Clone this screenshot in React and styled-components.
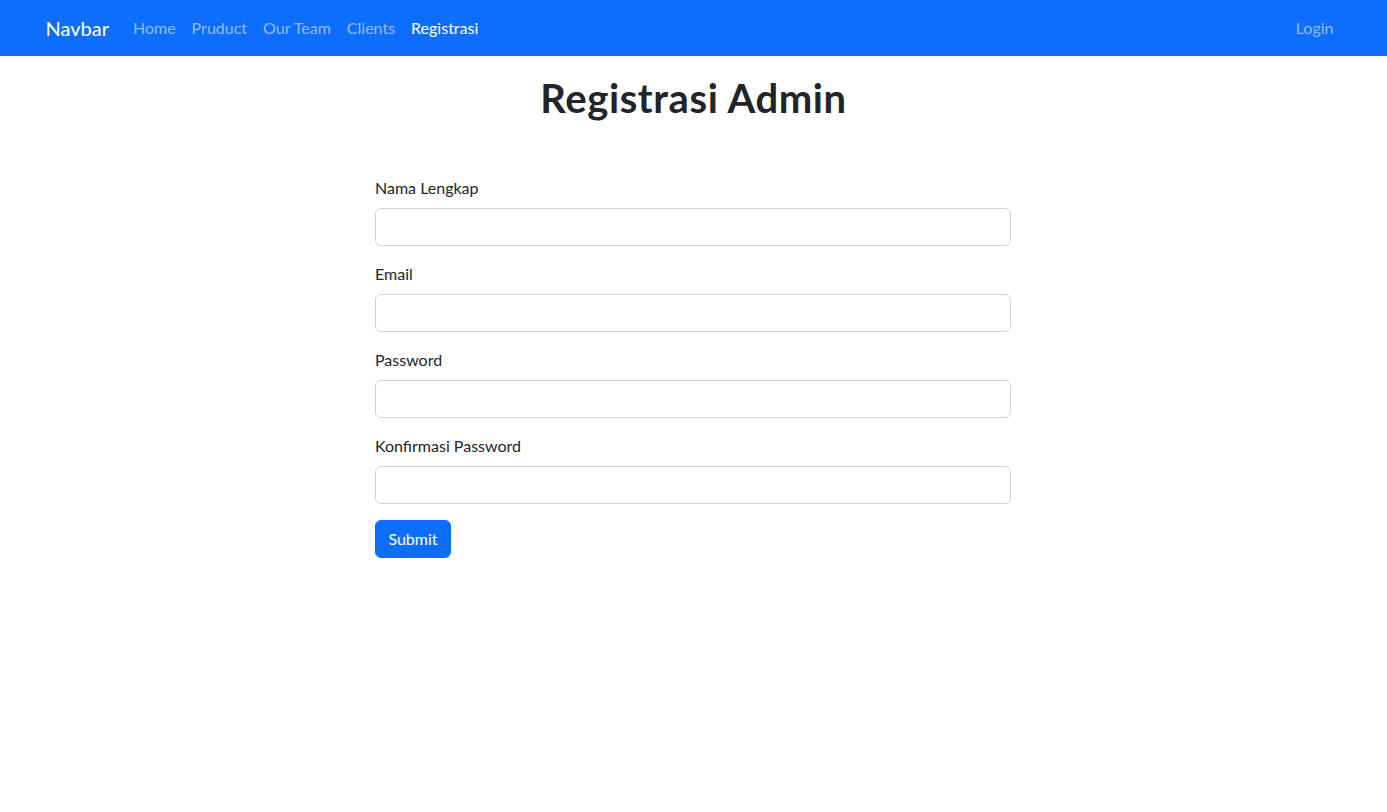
import React from "react";
import styled, { createGlobalStyle } from "styled-components";

const GlobalStyle = createGlobalStyle`
  * { box-sizing: border-box; }
  body {
    margin: 0;
    font-family: Lato, "Noto Sans", sans-serif;
    font-size: 16px;
    line-height: 1.5;
    color: #212529;
    background: #fff;
  }
`;

const Navbar = styled.nav`
  background: #0d6efd;
  height: 56px;
  display: flex;
  align-items: center;
`;

const NavContainer = styled.div`
  width: 100%;
  max-width: 1320px;
  margin: 0 auto;
  padding: 0 12px;
  display: flex;
  align-items: center;
`;

const Brand = styled.a`
  color: #fff;
  font-size: 20px;
  margin-right: 16px;
  text-decoration: none;
  line-height: 30px;
`;

const NavList = styled.div`
  display: flex;
  align-items: center;
  flex: 1;
`;

const NavLink = styled.a`
  padding: 8px;
  color: ${(p) => (p.active ? "#fff" : "rgba(255, 255, 255, 0.55)")};
  text-decoration: none;
  font-size: 16px;
`;

const Title = styled.h1`
  margin: 18px 0 0;
  font-size: 40px;
  font-weight: 700;
  line-height: 48px;
  letter-spacing: 0.6px;
  text-align: center;
`;

const Form = styled.form`
  width: 636px;
  margin: 54px 0 0 calc(50% - 318.5px);
`;

const Group = styled.div`
  margin-bottom: 16px;
`;

const Label = styled.label`
  display: block;
  margin-bottom: 8px;
`;

const Input = styled.input`
  display: block;
  width: 100%;
  height: 38px;
  padding: 6px 12px;
  font: inherit;
  border: 1px solid #ced4da;
  border-radius: 6px;
  outline: none;
`;

const Button = styled.button`
  background: #0d6efd;
  color: #fff;
  border: 1px solid #0d6efd;
  border-radius: 6px;
  height: 38px;
  width: 76px;
  padding: 0 12px;
  font: inherit;
`;

const fields = ["Nama Lengkap", "Email", "Password", "Konfirmasi Password"];

export default function App() {
  return (
    <>
      <GlobalStyle />
      <Navbar>
        <NavContainer>
          <Brand href="#">Navbar</Brand>
          <NavList>
            <NavLink href="#">Home</NavLink>
            <NavLink href="#">Pruduct</NavLink>
            <NavLink href="#">Our Team</NavLink>
            <NavLink href="#">Clients</NavLink>
            <NavLink href="#" active>
              Registrasi
            </NavLink>
          </NavList>
          <NavLink href="#">Login</NavLink>
        </NavContainer>
      </Navbar>
      <Title>Registrasi Admin</Title>
      <Form onSubmit={(e) => e.preventDefault()}>
        {fields.map((f) => (
          <Group key={f}>
            <Label>{f}</Label>
            <Input type={f.includes("Password") ? "password" : "text"} />
          </Group>
        ))}
        <Button type="submit">Submit</Button>
      </Form>
    </>
  );
}
